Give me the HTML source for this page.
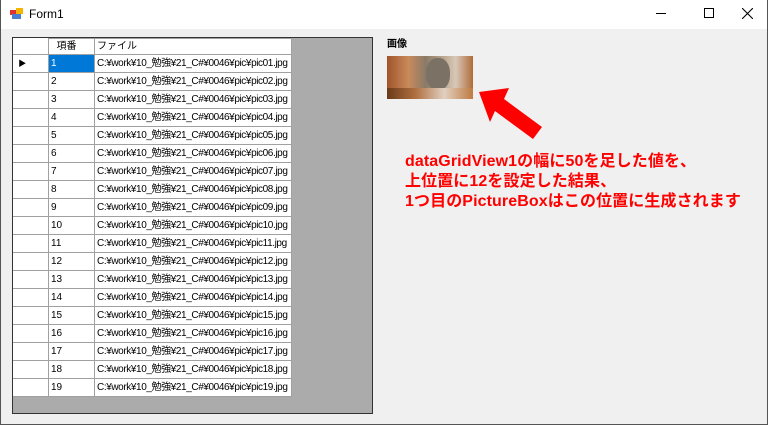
<!DOCTYPE html>
<html><head><meta charset="utf-8"><style>
*{margin:0;padding:0;box-sizing:border-box}
body{width:768px;height:426px;background:#fff;font-family:"Liberation Sans","Noto Sans CJK JP",sans-serif;position:relative;overflow:hidden}
.win{position:absolute;left:0;top:0;width:768px;height:425px;border:1px solid #555;border-top:none;background:#f0f0f0}
.title{position:absolute;left:0;top:0;width:766px;height:29px;background:#fff}
.title span{position:absolute;left:28px;top:7px;font-size:12px;color:#000}
.grid{position:absolute;left:11px;top:37px;width:361px;height:377px;background:#ababab;border:1px solid #333}
table{border-collapse:collapse;table-layout:fixed;width:278px;position:absolute;left:0;top:0;font-size:10px;background:#fff}
td{height:18px;border:1px solid #a0a0a0;padding:0 2px;white-space:nowrap;overflow:hidden;color:#000;vertical-align:middle;line-height:12px}
tr.h td{height:16px}
td.rh{border-color:#fff #a0a0a0 #a0a0a0 #fff;background:#fff}
td.f{letter-spacing:-0.4px}
.red{position:absolute;left:404px;color:#f00;font-weight:bold;font-size:16px;white-space:nowrap;letter-spacing:0.1px}
</style></head><body>
<div class="win">
<div class="title">
<svg style="position:absolute;left:9px;top:8px" width="13" height="12"><rect x="0" y="2" width="6" height="5" fill="#d33"/><rect x="6" y="0" width="7" height="6" fill="#f6b400"/><rect x="2" y="6" width="9" height="5" fill="#4a7fd0"/></svg>
<span>Form1</span>
<div style="position:absolute;left:655px;top:13px;width:10px;height:1px;background:#000"></div>
<div style="position:absolute;left:703px;top:8px;width:10px;height:10px;border:1px solid #000"></div>
<svg style="position:absolute;left:741px;top:8px" width="11" height="11"><path d="M0 0L11 11M11 0L0 11" stroke="#000" stroke-width="1.1"/></svg>
</div>
<div class="grid">
<table>
<colgroup><col style="width:35px"><col style="width:46px"><col style="width:197px"></colgroup>
<tr class="h"><td class="rh"></td><td>&nbsp;&nbsp;項番</td><td>ファイル</td></tr>
<tr><td class="rh" style="font-size:8px">&nbsp;▶</td><td style="background:#0078d7;color:#fff">1</td><td class="f">C:¥work¥10_勉強¥21_C#¥0046¥pic¥pic01.jpg</td></tr>
<tr><td class="rh"></td><td>2</td><td class="f">C:¥work¥10_勉強¥21_C#¥0046¥pic¥pic02.jpg</td></tr>
<tr><td class="rh"></td><td>3</td><td class="f">C:¥work¥10_勉強¥21_C#¥0046¥pic¥pic03.jpg</td></tr>
<tr><td class="rh"></td><td>4</td><td class="f">C:¥work¥10_勉強¥21_C#¥0046¥pic¥pic04.jpg</td></tr>
<tr><td class="rh"></td><td>5</td><td class="f">C:¥work¥10_勉強¥21_C#¥0046¥pic¥pic05.jpg</td></tr>
<tr><td class="rh"></td><td>6</td><td class="f">C:¥work¥10_勉強¥21_C#¥0046¥pic¥pic06.jpg</td></tr>
<tr><td class="rh"></td><td>7</td><td class="f">C:¥work¥10_勉強¥21_C#¥0046¥pic¥pic07.jpg</td></tr>
<tr><td class="rh"></td><td>8</td><td class="f">C:¥work¥10_勉強¥21_C#¥0046¥pic¥pic08.jpg</td></tr>
<tr><td class="rh"></td><td>9</td><td class="f">C:¥work¥10_勉強¥21_C#¥0046¥pic¥pic09.jpg</td></tr>
<tr><td class="rh"></td><td>10</td><td class="f">C:¥work¥10_勉強¥21_C#¥0046¥pic¥pic10.jpg</td></tr>
<tr><td class="rh"></td><td>11</td><td class="f">C:¥work¥10_勉強¥21_C#¥0046¥pic¥pic11.jpg</td></tr>
<tr><td class="rh"></td><td>12</td><td class="f">C:¥work¥10_勉強¥21_C#¥0046¥pic¥pic12.jpg</td></tr>
<tr><td class="rh"></td><td>13</td><td class="f">C:¥work¥10_勉強¥21_C#¥0046¥pic¥pic13.jpg</td></tr>
<tr><td class="rh"></td><td>14</td><td class="f">C:¥work¥10_勉強¥21_C#¥0046¥pic¥pic14.jpg</td></tr>
<tr><td class="rh"></td><td>15</td><td class="f">C:¥work¥10_勉強¥21_C#¥0046¥pic¥pic15.jpg</td></tr>
<tr><td class="rh"></td><td>16</td><td class="f">C:¥work¥10_勉強¥21_C#¥0046¥pic¥pic16.jpg</td></tr>
<tr><td class="rh"></td><td>17</td><td class="f">C:¥work¥10_勉強¥21_C#¥0046¥pic¥pic17.jpg</td></tr>
<tr><td class="rh"></td><td>18</td><td class="f">C:¥work¥10_勉強¥21_C#¥0046¥pic¥pic18.jpg</td></tr>
<tr><td class="rh"></td><td>19</td><td class="f">C:¥work¥10_勉強¥21_C#¥0046¥pic¥pic19.jpg</td></tr>
</table>
</div>
<div style="position:absolute;left:386px;top:35px;font-size:10px;font-weight:bold">画像</div>
<div style="position:absolute;left:386px;top:56px;width:86px;height:43px;background:linear-gradient(90deg,#a0542a 0%,#c98a5a 25%,#8a7a68 45%,#b09a80 60%,#d8c8b8 80%,#b06a3a 100%)"></div>
<div style="position:absolute;left:425px;top:58px;width:24px;height:32px;border-radius:45%;background:#7b7165"></div>
<div style="position:absolute;left:386px;top:88px;width:86px;height:11px;background:linear-gradient(90deg,#6a3a1a,#b07040,#e0d0c0,#c07a40)"></div>
<svg style="position:absolute;left:470px;top:82px" width="80" height="60"><polygon points="8,10 38,6 33,17 71,45 62,57 24,29 19,40" fill="#f00"/></svg>
<div class="red" style="top:147px">dataGridView1の幅に50を足した値を、</div>
<div class="red" style="top:167px">上位置に12を設定した結果、</div>
<div class="red" style="top:187px">1つ目のPictureBoxはこの位置に生成されます</div>
</div>
</body></html>
